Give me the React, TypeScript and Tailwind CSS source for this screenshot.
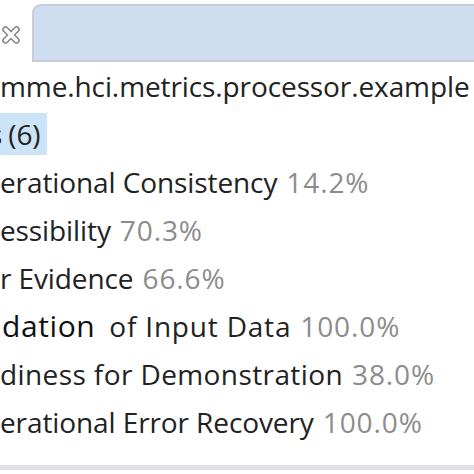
import React from 'react'

// rows of the metrics tree, cut off on the left by the view edge
type Row = { label: string; value?: string; lead?: string; head?: string; track?: string }

const rows: Row[] = [
  { label: 'mme.hci.metrics.processor.example' },
  { label: '(6)', lead: 's' },
  { label: 'erational Consistency', value: '14.2%' },
  { label: 'essibility', value: '70.3%' },
  { label: 'r Evidence', value: '66.6%' },
  { label: 'of Input Data', value: '100.0%', head: 'dation', track: 'tracking-[0.8px]' },
  { label: 'diness for Demonstration', value: '38.0%', track: 'tracking-[0.4px]' },
  { label: 'erational Error Recovery', value: '100.0%' },
]

function CloseIcon() {
  return (
    <svg width="20" height="20" viewBox="0 0 20 20" fill="none">
      <g strokeLinecap="round">
        <path d="M4.5 4.5 L15.5 15.5 M15.5 4.5 L4.5 15.5" stroke="#808080" strokeWidth="6.5" />
        <path d="M4.5 4.5 L15.5 15.5 M15.5 4.5 L4.5 15.5" stroke="#ffffff" strokeWidth="3.6" />
      </g>
    </svg>
  )
}

export default function App() {
  return (
    <div
      className="w-[474px] h-[474px] overflow-hidden bg-white text-[#222]"
      style={{ fontFamily: '"Open Sans", "Noto Sans", sans-serif' }}
    >
      {/* Tab strip */}
      <div className="flex h-[62px] pt-[4px]">
        <div className="w-[32px] flex items-center pl-[1px] pt-[4px]">
          <CloseIcon />
        </div>
        <div className="flex-1 bg-[#cedef0] border-t-2 border-l-2 border-b-2 border-[#c6cdd8] rounded-tl-[9px]" />
      </div>

      {/* Tree rows */}
      <div className="text-[28px] leading-[48px] whitespace-nowrap tracking-[-0.1px]">
        {rows.map((r, i) => (
          <div key={i} className="h-[48px] flex items-center">
            {r.lead && (
              <span className="inline-flex items-center h-[42px] w-[47px] bg-[#cce4f7] overflow-hidden">
                <span className="-ml-[11px] mr-[6px]">{r.lead}</span>
                <span>{r.label}</span>
              </span>
            )}
            {r.head && (
              <span className="ml-[2px] mr-[14px] text-[30px] tracking-[0.6px] text-[#111]">{r.head}</span>
            )}
            {!r.lead && <span className={r.track}>{r.label}</span>}
            {r.value && <span className="ml-[9px] text-[#8c8c8c] tracking-[0.9px]">{r.value}</span>}
          </div>
        ))}
      </div>

      <div className="mt-[19px] h-[5px] bg-[#dfe0e6]" />
    </div>
  )
}
